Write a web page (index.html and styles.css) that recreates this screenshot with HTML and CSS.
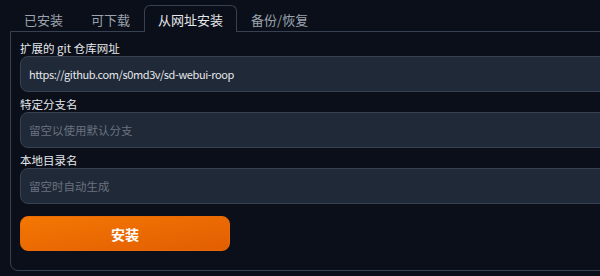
FILE: index.html
```html
<!DOCTYPE html>
<html lang="zh">
<head>
<meta charset="utf-8">
<link rel="stylesheet" href="styles.css">
</head>
<body>
<div class="app">
  <div class="tabs">
    <button class="tab">已安装</button>
    <button class="tab">可下载</button>
    <button class="tab active">从网址安装</button>
    <button class="tab">备份/恢复</button>
  </div>
  <div class="panel">
    <label class="field">
      <span class="label">扩展的 git 仓库网址</span>
      <input class="input url" type="text" value="https://github.com/s0md3v/sd-webui-roop">
    </label>
    <label class="field">
      <span class="label">特定分支名</span>
      <input class="input" type="text" placeholder="留空以使用默认分支">
    </label>
    <label class="field">
      <span class="label">本地目录名</span>
      <input class="input" type="text" placeholder="留空时自动生成">
    </label>
    <button class="install">安装</button>
  </div>
</div>
</body>
</html>
```

FILE: styles.css
```css
html, body {
  margin: 0;
  padding: 0;
  background: #0b0f19;
  overflow: hidden;
}
body {
  width: 600px;
  height: 276px;
  font-family: "Noto Sans CJK SC", "Noto Sans", sans-serif;
  color: #e5e7eb;
}
.app {
  width: 720px;
  padding-top: 5px;
}
.tabs {
  display: flex;
  padding-left: 10px;
  position: relative;
  z-index: 1;
}
.tab {
  font-family: inherit;
  font-size: 13px;
  line-height: 25px;
  height: 27px;
  padding: 0 13px;
  border: 1px solid transparent;
  border-bottom: none;
  border-radius: 6px 6px 0 0;
  background: transparent;
  color: #9ca3af;
  margin: 0;
  cursor: pointer;
}
.tab.active {
  border-color: #374151;
  background: #0b0f19;
  color: #e5e7eb;
}
.panel {
  margin-left: 10px;
  margin-top: -1px;
  border: 1px solid #374151;
  border-radius: 0 0 0 8px;
  padding: 8px 9px 19px 9px;
  display: flex;
  flex-direction: column;
  gap: 4px;
}
.field {
  display: flex;
  flex-direction: column;
}
.label {
  font-size: 11.5px;
  line-height: 16px;
  color: #e5e7eb;
}
.input {
  box-sizing: border-box;
  height: 36px;
  width: 100%;
  border: 1px solid #374151;
  border-radius: 8px;
  background: #1f2937;
  color: #e5e7eb;
  font-family: inherit;
  font-size: 11.5px;
  padding: 0 8px;
  outline: none;
}
.input.url {
  font-size: 11px;
  letter-spacing: -0.4px;
}
.input::placeholder {
  color: #6b7280;
}
.install {
  margin-top: 8px;
  width: 210px;
  height: 35px;
  border: 1px solid #ea6a06;
  border-radius: 8px;
  background: linear-gradient(to bottom right, #f47703, #e25e02);
  color: #ffffff;
  font-family: inherit;
  font-weight: 700;
  font-size: 14px;
  cursor: pointer;
}
```
